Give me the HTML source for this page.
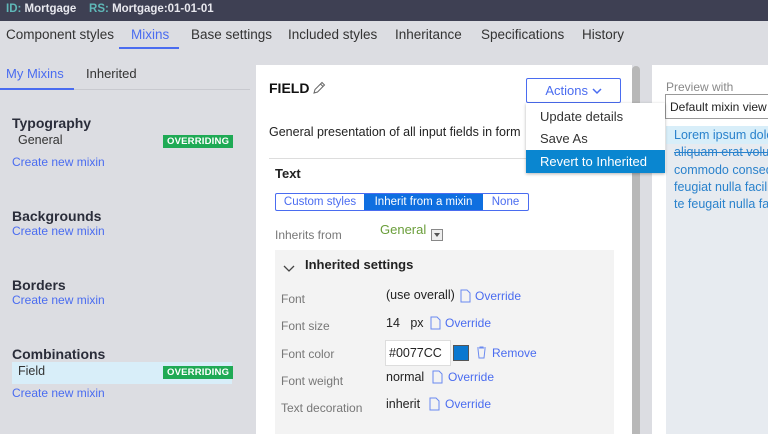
<!DOCTYPE html><html><head><style>
*{margin:0;padding:0;box-sizing:border-box}
body{width:768px;height:434px;overflow:hidden;background:#dcdde2;font-family:"Liberation Sans",sans-serif;position:relative;color:#222}
.a{position:absolute;white-space:nowrap}
.lnk{color:#4a6cf0;font-size:12px}
.lbl{color:#777;font-size:12px}
.val{color:#222;font-size:12.5px}
.badge{background:#1faa55;color:#fff;font-weight:bold;font-size:9.5px;padding:1px 4px;letter-spacing:.2px}
.h{font-weight:bold;font-size:14px;color:#2a2d3a}
.t{top:27px;font-size:13.5px;color:#333}
</style></head><body>
<div class="a" style="left:0;top:0;width:768px;height:21px;background:#3e4053"></div>
<div class="a" style="left:6px;top:3px;font-size:11.5px;font-weight:bold;color:#5fb8b8">ID: <span style="color:#e8e8ee">Mortgage</span>&nbsp;&nbsp;&nbsp; RS: <span style="color:#e8e8ee">Mortgage:01-01-01</span></div>
<div class="a t" style="left:6px">Component styles</div>
<div class="a t" style="left:131px;color:#4a6cf0">Mixins</div>
<div class="a" style="left:119px;top:47px;width:60px;height:2px;background:#4a6cf0"></div>
<div class="a t" style="left:191px">Base settings</div>
<div class="a t" style="left:288px">Included styles</div>
<div class="a t" style="left:395px">Inheritance</div>
<div class="a t" style="left:481px">Specifications</div>
<div class="a t" style="left:582px">History</div>
<div class="a" style="top:66px;left:6px;font-size:13px;color:#4a6cf0">My Mixins</div>
<div class="a" style="top:66px;left:86px;font-size:13px;color:#333">Inherited</div>
<div class="a" style="left:0;top:89px;width:250px;height:1px;background:#c8c9cf"></div>
<div class="a" style="left:0;top:88px;width:74px;height:2px;background:#4a6cf0"></div>
<div class="a h" style="left:12px;top:115px">Typography</div>
<div class="a val" style="left:18px;top:133px;color:#333">General</div>
<div class="a badge" style="left:163px;top:135px">OVERRIDING</div>
<div class="a lnk" style="left:12px;top:155px">Create new mixin</div>
<div class="a h" style="left:12px;top:208px">Backgrounds</div>
<div class="a lnk" style="left:12px;top:224px">Create new mixin</div>
<div class="a h" style="left:12px;top:277px">Borders</div>
<div class="a lnk" style="left:12px;top:293px">Create new mixin</div>
<div class="a h" style="left:12px;top:346px">Combinations</div>
<div class="a" style="left:12px;top:362px;width:220px;height:22px;background:#d8eef9"></div>
<div class="a val" style="left:18px;top:364px;color:#333">Field</div>
<div class="a badge" style="left:163px;top:366px">OVERRIDING</div>
<div class="a lnk" style="left:12px;top:386px">Create new mixin</div>
<div class="a" style="left:256px;top:65px;width:376px;height:369px;background:#fff"></div>
<div class="a" style="left:632px;top:66px;width:8px;height:368px;background:#b8b8b8;border-radius:4px 4px 0 0"></div>
<div class="a" style="left:269px;top:80px;font-weight:bold;font-size:14px;color:#111">FIELD</div>
<svg class="a" style="left:312px;top:81px" width="14" height="14" viewBox="0 0 14 14"><path d="M2 12l1-3.5L10 1.5l2.5 2.5L5.5 11z M8.5 3l2.5 2.5" fill="none" stroke="#666" stroke-width="1"/></svg>
<div class="a" style="left:526px;top:78px;width:95px;height:25px;border:1px solid #4a6cf0;border-radius:2px;font-size:13px;color:#4a6cf0;text-align:center;line-height:23px">Actions <svg width="10" height="7" viewBox="0 0 10 7"><path d="M1 1l4 4 4-4" fill="none" stroke="#4a6cf0" stroke-width="1.5"/></svg></div>
<div class="a" style="left:269px;top:125px;font-size:12.5px;color:#222">General presentation of all input fields in form</div>
<div class="a" style="left:269px;top:158px;width:351px;height:1px;background:#ddd"></div>
<div class="a" style="left:275px;top:166px;font-weight:bold;font-size:13px;color:#222">Text</div>
<div class="a" style="left:275px;top:193px;height:18px;border:1px solid #4a6cf0;border-radius:2px;display:flex;font-size:11.5px;line-height:16px;text-align:center">
<span style="width:88px;color:#4a6cf0">Custom styles</span><span style="width:119px;background:#0f6fe0;color:#fff">Inherit from a mixin</span><span style="width:45px;color:#4a6cf0">None</span></div>
<div class="a lbl" style="left:275px;top:228px">Inherits from</div>
<div class="a" style="left:380px;top:222px;font-size:13px;color:#6a9e3a">General</div>
<div class="a" style="left:431px;top:229px;width:12px;height:12px;border:1px solid #888;background:#eee"><div style="margin:3px 2px;border-left:3px solid transparent;border-right:3px solid transparent;border-top:4px solid #555;width:0"></div></div>
<div class="a" style="left:275px;top:250px;width:339px;height:184px;background:#f3f3f3"></div>
<svg class="a" style="left:283px;top:265px" width="12" height="8" viewBox="0 0 12 8"><path d="M1 1l5 5 5-5" fill="none" stroke="#444" stroke-width="1.3"/></svg>
<div class="a" style="left:305px;top:257px;font-weight:bold;font-size:13px;color:#222">Inherited settings</div>
<div class="a lbl" style="left:281px;top:292px">Font</div>
<div class="a val" style="left:386px;top:288px">(use overall)</div>
<div class="a lbl" style="left:281px;top:319px">Font size</div>
<div class="a val" style="left:386px;top:316px">14&nbsp;&nbsp; px</div>
<div class="a lbl" style="left:281px;top:347px">Font color</div>
<div class="a" style="left:385px;top:340px;width:66px;height:26px;background:#fff;border:1px solid #ddd;font-size:12.5px;padding:5px 3px">#0077CC</div>
<div class="a" style="left:453px;top:345px;width:16px;height:16px;background:#0a78d0;border:1px solid #555"></div>
<div class="a lbl" style="left:281px;top:374px">Font weight</div>
<div class="a val" style="left:386px;top:370px">normal</div>
<div class="a lbl" style="left:281px;top:401px">Text decoration</div>
<div class="a val" style="left:386px;top:397px">inherit</div>
<svg class="a" style="left:460px;top:289px" width="11" height="14"><path d="M1 1h6l3 3v9H1z" fill="none" stroke="#6a8af0"/></svg><div class="a lnk" style="left:475px;top:289px">Override</div>
<svg class="a" style="left:430px;top:316px" width="11" height="14"><path d="M1 1h6l3 3v9H1z" fill="none" stroke="#6a8af0"/></svg><div class="a lnk" style="left:445px;top:316px">Override</div>
<svg class="a" style="left:476px;top:346px" width="11" height="13"><path d="M1 2h9M4 2V1h3v1M2 3l1 9h5l1-9" fill="none" stroke="#6a8af0"/></svg><div class="a lnk" style="left:492px;top:346px">Remove</div>
<svg class="a" style="left:432px;top:370px" width="11" height="14"><path d="M1 1h6l3 3v9H1z" fill="none" stroke="#6a8af0"/></svg><div class="a lnk" style="left:448px;top:370px">Override</div>
<svg class="a" style="left:429px;top:397px" width="11" height="14"><path d="M1 1h6l3 3v9H1z" fill="none" stroke="#6a8af0"/></svg><div class="a lnk" style="left:445px;top:397px">Override</div>
<div class="a" style="left:652px;top:65px;width:116px;height:369px;background:#fff"></div>
<div class="a" style="left:666px;top:80px;font-size:12px;color:#888">Preview with</div>
<div class="a" style="left:665px;top:94px;width:110px;height:25px;border:1px solid #999;font-size:12px;padding:5px 4px">Default mixin view</div>
<div class="a" style="left:666px;top:126px;width:102px;height:308px;background:#e7ebf0"></div>
<div class="a" style="left:666px;top:126px;width:102px;height:18px;background:#d8eef9"></div>
<div class="a" style="left:674px;top:127px;font-size:12.5px;line-height:17.3px;color:#2a82cc">Lorem ipsum dolor<br><s>aliquam erat volu</s><br>commodo consequ<br>feugiat nulla facili<br>te feugait nulla fa</div>
<div class="a" style="left:526px;top:103px;width:139px;height:70px;background:#fff;box-shadow:0 1px 3px rgba(0,0,0,.3)"></div>
<div class="a" style="left:540px;top:109px;font-size:13px;color:#333">Update details</div>
<div class="a" style="left:540px;top:131px;font-size:13px;color:#333">Save As</div>
<div class="a" style="left:526px;top:150px;width:139px;height:23px;background:#0a86d0"></div>
<div class="a" style="left:540px;top:154px;font-size:13px;color:#fff">Revert to Inherited</div>
</body></html>
